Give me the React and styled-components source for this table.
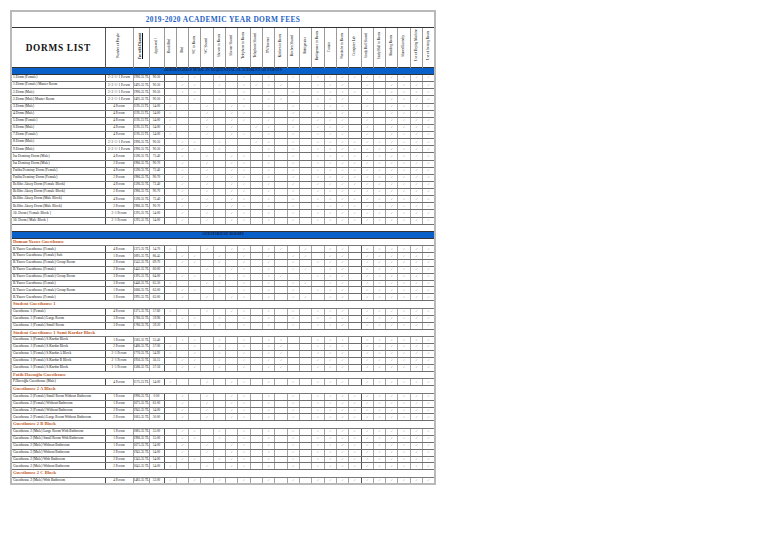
import styled, { createGlobalStyle } from "styled-components";

const GlobalStyle = createGlobalStyle`
  html, body {
    margin: 0;
    background: #fff;
  }
  body {
    font-family: "Liberation Serif", "Times New Roman", serif;
  }
`;

const Page = styled.div`
  padding: 10px;
`;

const Sheet = styled.table`
  width: 424px;
  table-layout: fixed;
  border-collapse: collapse;
  border: 2px solid #b9b9b9;
  color: #111;
`;

const Col = styled.col`
  width: ${(p) => p.$w}px;
`;

const TitleCell = styled.td`
  height: 15px;
  padding: 0;
  text-align: center;
  font-size: 7.4px;
  font-weight: 700;
  letter-spacing: 0.35px;
  color: #1f62c6;
  border-bottom: 1px solid #333;
`;

const ListHeading = styled.td`
  height: 39px;
  padding: 0;
  text-align: center;
  font-size: 9.3px;
  font-weight: 900;
  letter-spacing: 0.7px;
  border-right: 1px solid #555;
`;

const LabelCell = styled.td`
  padding: 0;
  border-left: 1px solid #9a9a9a;
  text-align: center;
  vertical-align: middle;
`;

const VLabel = styled.div`
  display: inline-block;
  writing-mode: vertical-rl;
  transform: rotate(180deg);
  font-size: 3.4px;
  line-height: 1.1;
  max-height: 36px;
  white-space: nowrap;
  font-weight: ${(p) => (p.$strong ? 700 : 400)};
  text-decoration: ${(p) => (p.$strong ? "underline" : "none")};
`;

const BandCell = styled.td`
  height: 6px;
  padding: 0;
  background: #0a60c9;
  color: #0c1f4a;
  font-size: 3.8px;
  font-weight: 700;
  text-align: center;
  line-height: 1;
  border-top: 1px solid #333;
  border-bottom: 1px solid #333;
`;

const SpacerCell = styled.td`
  height: 6px;
  padding: 0;
`;

const SectionCell = styled.td`
  height: 6.8px;
  padding: 0 0 0 1px;
  color: #c35a1f;
  font-size: 4.6px;
  font-weight: 700;
  line-height: 1;
  text-align: left;
  border-top: 1px solid #777;
  border-bottom: 1px solid #777;
`;

const Row = styled.tr`
  height: ${(p) => p.$h}px;
`;

const NameCell = styled.td`
  padding: 0 0 0 1px;
  font-size: 3.5px;
  line-height: 1;
  white-space: nowrap;
  overflow: hidden;
  border: 1px solid #6f6f6f;
  border-right-color: #444;
`;

const Cell = styled.td`
  padding: 0;
  font-size: 3.3px;
  line-height: 1;
  text-align: center;
  white-space: nowrap;
  overflow: hidden;
  color: #222;
  border-top: 1px solid #6f6f6f;
  border-bottom: 1px solid #6f6f6f;
  border-left: 1px solid ${(p) => (p.$dark ? "#555" : "#a5a5a5")};
`;

const Mark = styled.span`
  color: #8a8a8a;
  font-size: 3px;
  line-height: 1;
  font-family: "DejaVu Sans", sans-serif;
`;

const COLS = 26;
const FEATURE_W = 271 / 22;

const headLabels = [
  "Number of People",
  "Fee with Discount",
  "Approved ?",
  "Bunk Bed",
  "Bed",
  "WC in Room",
  "WC Shared",
  "Shower in Room",
  "Shower Shared",
  "Telephone in Room",
  "Telephone Shared",
  "TV/Internet",
  "Kitchen in Room",
  "Kitchen Shared",
  "Refrigerator",
  "Refrigerator in Room",
  "Curtain",
  "Wardrobe in Room",
  "Computer Lab",
  "Study Hall Shared",
  "Study Hall in Room",
  "Reading Room",
  "Shared Laundry",
  "Use of Drying Machine",
  "Use of Ironing Room",
];

const TAIL = [16, 18, 19, 20, 21];
const FULL = [8, 10, 12, 13, 14, 15, 16, 17, 18, 19, 20, 21];
const R_A = [8, 10, 12, 13, 14, ...TAIL];
const R_B = [8, 9, 12, 13, 14, ...TAIL];
const G_ALL = [16, 17, 18, 19, 20, 21];

const dorms = [
  ["1.Dorm (Female)", "2+2+1+1 Person", "1996.35 TL", "90.50", [1, 2, 4, 6], FULL],
  ["1.Dorm (Female) Master Room", "2+2+1+1 Person", "2495.35 TL", "90.50", [1, 2, 4, 6, 7], R_B],
  ["2.Dorm (Male)", "2+2+1+1 Person", "1996.35 TL", "90.50", [1, 2, 4, 6], FULL],
  ["2.Dorm (Male) Master Room", "2+2+1+1 Person", "2495.35 TL", "90.50", [0, 2, 4, 6], R_B],
  ["3.Dorm (Male)", "4 Person", "1195.35 TL", "54.00", [0, 3, 5, 6], R_A],
  ["4.Dorm (Male)", "4 Person", "1195.35 TL", "54.00", [0, 3, 5, 6], R_A],
  ["5.Dorm (Female)", "4 Person", "1195.35 TL", "54.00", [0, 3, 5, 6], R_A],
  ["6.Dorm (Male)", "4 Person", "1195.35 TL", "54.00", [0, 3, 5, 7], R_A],
  ["7.Dorm (Female)", "4 Person", "1195.35 TL", "54.00", [0, 3, 5, 6], R_A],
  ["8.Dorm (Male)", "2+2+1+1 Person", "1996.35 TL", "90.50", [1, 2, 4, 7], FULL],
  ["9.Dorm (Male)", "2+2+1+1 Person", "1996.35 TL", "90.50", [1, 2, 4], FULL],
  ["İsa Demiray Dorm (Male)", "4 Person", "1596.35 TL", "72.40", [1, 3, 5, 6], FULL],
  ["İsa Demiray Dorm (Male)", "2 Person", "1986.35 TL", "90.70", [1, 3, 5, 6], FULL],
  ["Fatiha Demiray Dorm (Female)", "4 Person", "1596.35 TL", "72.40", [1, 3, 5, 6], FULL],
  ["Fatiha Demiray Dorm (Female)", "2 Person", "1986.35 TL", "90.70", [1, 3, 5, 6], FULL],
  ["Bellibo Aksoy Dorm (Female Block)", "4 Person", "1596.35 TL", "72.40", [1, 3, 5, 6], FULL],
  ["Bellibo Aksoy Dorm (Female Block)", "2 Person", "1986.35 TL", "90.70", [1, 3, 5, 6], FULL],
  ["Bellibo Aksoy Dorm (Male Block)", "4 Person", "1596.35 TL", "72.40", [1, 3, 5, 6], FULL],
  ["Bellibo Aksoy Dorm (Male Block)", "2 Person", "1986.35 TL", "90.70", [1, 3, 5, 6], FULL],
  ["10. Dorm ( Female Block )", "2+1 Person", "1295.35 TL", "54.00", [1, 3, 5, 6], FULL],
  ["10. Dorm ( Male Block )", "2+1 Person", "1295.35 TL", "54.00", [1, 3, 5, 6], FULL],
];

const guesthouses = [
  {
    title: "Duman Yazıcı Guesthouse",
    rows: [
      ["B.Yazıcı Guesthouse (Female)", "4 Person", "1375.35 TL", "54.70", [0, 3, 5, 6, 8, 9, 11, 13, 14]],
      ["B.Yazıcı Guesthouse (Female) Suit", "1 Person", "1895.35 TL", "86.45", [1, 2, 4, 6, 8, 10, 11, 13, 14]],
      ["B.Yazıcı Guesthouse (Female) Group Room", "2 Person", "1545.35 TL", "69.70", [1, 2, 4, 6, 8, 10, 12, 13, 14]],
      ["B.Yazıcı Guesthouse (Female)", "2 Person", "1445.35 TL", "60.00", [0, 3, 5, 6, 8, 10, 11, 13, 14]],
      ["B.Yazıcı Guesthouse (Female) Group Room", "3 Person", "1395.35 TL", "64.00", [1, 2, 4, 6, 8, 9, 12, 13, 14]],
      ["B.Yazıcı Guesthouse (Female)", "3 Person", "1446.35 TL", "65.50", [0, 3, 4, 6, 8, 10, 11, 13, 14]],
      ["B.Yazıcı Guesthouse (Female) Group Room", "1 Person", "1686.35 TL", "63.00", [1, 2, 4, 6, 8, 10, 12, 13, 14]],
      ["B.Yazıcı Guesthouse (Female)", "1 Person", "1995.35 TL", "63.00", [1, 3, 5, 6, 8, 10, 11, 13, 14]],
    ],
  },
  {
    title: "Student Guesthouse 1",
    rows: [
      ["Guesthouse 1 (Female)", "4 Person", "1375.35 TL", "57.60", [0, 3, 5, 6, 8, 10, 12, 13, 14]],
      ["Guesthouse 1 (Female) Large Room", "3 Person", "1786.35 TL", "59.96", [1, 2, 4, 6, 8, 10, 12, 13, 14]],
      ["Guesthouse 1 (Female) Small Room", "3 Person", "1786.35 TL", "59.20", [0, 2, 4, 6, 8, 10, 12, 13, 14]],
    ],
  },
  {
    title: "Student Guesthouse 1 Sami Kardar Block",
    rows: [
      ["Guesthouse 1 (Female) S.Kardar Block", "1 Person", "1585.35 TL", "55.40", [1, 2, 4, 6, 8, 9, 12, 13, 14]],
      ["Guesthouse 1 (Female) S.Kardar Block", "2 Person", "1486.35 TL", "57.00", [0, 2, 4, 6, 8, 9, 12, 13, 14]],
      ["Guesthouse 1 (Female) S.Kardar A Block", "2+1 Person", "1776.35 TL", "54.92", [0, 2, 4, 6, 8, 9, 12, 13, 14]],
      ["Guesthouse 1 (Female) S.Kardar B Block", "2+1 Person", "1956.35 TL", "56.15", [1, 2, 4, 6, 8, 9, 12, 13, 14]],
      ["Guesthouse 1 (Female) S.Kardar Block", "1+1 Person", "1586.35 TL", "57.16", [1, 2, 4, 6, 8, 9, 12, 13, 14]],
    ],
  },
  {
    title: "Fatih Hacıoğlu Guesthouse",
    rows: [
      ["F.Hacıoğlu Guesthouse (Male)", "4 Person", "1175.35 TL", "54.00", [0, 3, 5, 6, 8, 10, 12, 13, 14]],
    ],
  },
  {
    title: "Guesthouse 2 A Block",
    rows: [
      ["Guesthouse 2 (Female) Small Room Without Bathroom", "1 Person", "1996.35 TL", "0.00", [1, 3, 5, 6, 8, 10, 12, 13, 14, 15]],
      ["Guesthouse 2 (Female) Without Bathroom", "1 Person", "1675.35 TL", "61.00", [1, 3, 5, 6, 8, 10, 12, 13, 14, 15]],
      ["Guesthouse 2 (Female) Without Bathroom", "2 Person", "1945.35 TL", "54.00", [1, 3, 5, 6, 8, 10, 12, 13, 14, 15]],
      ["Guesthouse 2 (Female) Large Room Without Bathroom", "2 Person", "1065.35 TL", "50.00", [1, 3, 5, 6, 8, 10, 12, 13, 14, 15]],
    ],
  },
  {
    title: "Guesthouse 2 B Block",
    rows: [
      ["Guesthouse 2 (Male) Large Room With Bathroom", "1 Person", "1885.35 TL", "55.00", [1, 2, 4, 6, 8, 10, 12, 13, 14, 15]],
      ["Guesthouse 2 (Male) Small Room With Bathroom", "1 Person", "1986.35 TL", "55.00", [1, 2, 4, 6, 8, 10, 12, 13, 14, 15]],
      ["Guesthouse 2 (Male) Without Bathroom", "1 Person", "1675.35 TL", "54.00", [1, 3, 5, 6, 8, 10, 12, 13, 14, 15]],
      ["Guesthouse 2 (Male) Without Bathroom", "2 Person", "1945.35 TL", "54.00", [1, 3, 5, 6, 8, 10, 12, 13, 14, 15]],
      ["Guesthouse 2 (Male) With Bathroom", "2 Person", "1345.35 TL", "54.00", [1, 2, 4, 5, 6, 8, 10, 12, 13, 14, 15]],
      ["Guesthouse 2 (Male) Without Bathroom", "2 Person", "1645.35 TL", "54.00", [0, 3, 5, 6, 8, 10, 12, 13, 14, 15]],
    ],
  },
  {
    title: "Guesthouse 2 C Block",
    rows: [
      ["Guesthouse 2 (Male) With Bathroom", "4 Person", "1485.35 TL", "53.00", [0, 2, 4, 6, 8, 10, 12, 13, 14, 15]],
    ],
  },
];

function DataRow({ name, people, fee, daily, marks, height }) {
  return (
    <Row $h={height}>
      <NameCell>{name}</NameCell>
      <Cell $dark>{people}</Cell>
      <Cell>{fee}</Cell>
      <Cell>{daily}</Cell>
      {Array.from({ length: 22 }, (_, i) => (
        <Cell key={i} $dark={i === 0 || i === 16}>
          {marks.includes(i) ? <Mark>✓</Mark> : null}
        </Cell>
      ))}
    </Row>
  );
}

export default function App() {
  return (
    <>
      <GlobalStyle />
      <Page>
        <Sheet>
          <colgroup>
            <Col $w={94} />
            <Col $w={28} />
            <Col $w={16} />
            <Col $w={15} />
            {Array.from({ length: 22 }, (_, i) => (
              <Col key={i} $w={FEATURE_W} />
            ))}
          </colgroup>
          <tbody>
            <tr>
              <TitleCell colSpan={COLS}>2019-2020 ACADEMIC YEAR DORM FEES</TitleCell>
            </tr>
            <tr>
              <ListHeading>DORMS LIST</ListHeading>
              {headLabels.map((label, i) => (
                <LabelCell key={label}>
                  <VLabel $strong={i === 1}>{label}</VLabel>
                </LabelCell>
              ))}
            </tr>
            <tr>
              <BandCell colSpan={COLS}>
                DORMITORIES MADE IN SEQUENTIAL PLACEMENT OF POINTS
              </BandCell>
            </tr>
            {dorms.map(([name, people, fee, daily, left, right], i) => (
              <DataRow
                key={i}
                name={name}
                people={people}
                fee={fee}
                daily={daily}
                marks={[...left, ...right]}
                height={7.14}
              />
            ))}
            <tr>
              <SpacerCell colSpan={COLS} />
            </tr>
            <tr>
              <BandCell colSpan={COLS}>GUESTHOUSE ROOMS</BandCell>
            </tr>
            {guesthouses.map((group) => [
              <tr key={group.title}>
                <SectionCell colSpan={COLS}>{group.title}</SectionCell>
              </tr>,
              ...group.rows.map(([name, people, fee, daily, marks], i) => (
                <DataRow
                  key={group.title + i}
                  name={name}
                  people={people}
                  fee={fee}
                  daily={daily}
                  marks={[...marks, ...G_ALL]}
                  height={6.85}
                />
              )),
            ])}
          </tbody>
        </Sheet>
      </Page>
    </>
  );
}
